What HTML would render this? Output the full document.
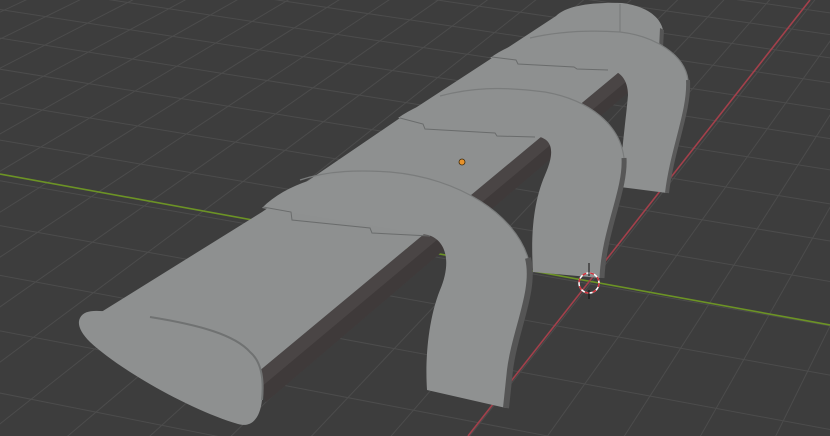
<!DOCTYPE html>
<html><head><meta charset="utf-8"><style>
html,body{margin:0;padding:0;background:#3d3d3d;width:830px;height:436px;overflow:hidden}
svg{display:block;position:absolute;left:0;top:0}
</style></head><body>
<svg id="s" width="830" height="436" viewBox="0 0 830 436" xmlns="http://www.w3.org/2000/svg">
<rect width="830" height="436" fill="#3d3d3d"/>
<g id="grid" stroke="#4c4c4c" stroke-width="1" fill="none"></g>
<line x1="0" y1="174" x2="830" y2="325" stroke="#6c9325" stroke-width="1.6"/>
<line x1="810" y1="0" x2="468" y2="436" stroke="#a3404b" stroke-width="1.6"/>
<polygon points="258,372 636,58 645,78 266,402" fill="#4a4545"/>
<polygon points="260,388 640,70 645,78 266,402" fill="#3f3a3a"/>
<path d="M98,314 L262,212 L400,118 L492,58 L556,16 C566,6 590,2 622,3 C645,6 660,16 663,30 L662,48 L636,58 L258,372 Z" fill="#8e9090"/>
<line x1="620" y1="4" x2="620" y2="32" stroke="#777" stroke-width="1"/>
<path d="M660,28 L664,30 L663,48 L659,50 Z" fill="#555"/>
<path d="M80,318 C84,310 95,310 110,312 C170,318 230,330 250,352 C262,362 264,380 262,400 C260,418 252,428 238,424 C190,410 120,370 90,342 C80,332 77,324 80,318 Z" fill="#8e9090"/>
<path d="M150,317 C200,325 235,335 250,352 C262,362 264,380 262,400" fill="none" stroke="#707272" stroke-width="2"/>
<path d="M490,58 C520,36 570,28 620,32 C655,36 685,55 688,80 C690,110 672,150 667,193 L620,187 C620,160 626,120 628,95 C628,80 620,70 608,70 Z" fill="#8e9090"/>
<path d="M688,80 C690,110 672,150 667,193" fill="none" stroke="#5a5a5a" stroke-width="4"/>
<path d="M398,118 C430,95 490,84 545,92 C590,100 620,125 624,158 C626,190 604,230 600,278 L533,272 C531,240 532,205 545,175 C556,150 552,138 535,136 Z" fill="#8e9090"/>
<path d="M624,158 C626,190 604,230 602,278" fill="none" stroke="#575757" stroke-width="5"/>
<path d="M262,208 C290,180 340,168 390,172 C460,178 515,215 528,258 C536,290 515,330 510,370 L506,408 L427,390 C425,360 428,320 440,290 C452,262 446,240 428,235 Z" fill="#8f9191"/>
<path d="M528,258 C536,290 515,330 510,370 L506,408" fill="none" stroke="#555" stroke-width="6"/>
<path d="M300,180 C330,170 360,170 390,172 C460,178 515,215 528,258" fill="none" stroke="#7a7c7c" stroke-width="1.2"/>
<path d="M440,96 C470,88 500,86 545,92 C590,100 620,125 624,158" fill="none" stroke="#7a7c7c" stroke-width="1.2"/>
<path d="M530,38 C560,31 590,30 620,32 C655,36 685,55 688,80" fill="none" stroke="#7a7c7c" stroke-width="1.2"/>
<g fill="none" stroke="#6a6c6c" stroke-width="1">
<polyline points="263,207 291,212 292,220 370,228 372,233 430,236"/>
<polyline points="400,118 423,124 425,129 495,133 497,136 535,137"/>
<polyline points="492,57 516,60 518,64 574,67 577,69 608,70"/>
</g>
<circle cx="462" cy="162" r="3" fill="#e8922a" stroke="#3a2a10" stroke-width="0.8"/>
<circle cx="589" cy="283" r="10" fill="none" stroke="#fff" stroke-width="1.5"/>
<circle cx="589" cy="283" r="10" fill="none" stroke="#d0303a" stroke-width="1.5" stroke-dasharray="4 4"/>
<line x1="589" y1="263" x2="589" y2="276" stroke="#111" stroke-width="1"/>
<line x1="589" y1="290" x2="589" y2="299" stroke="#111" stroke-width="1"/>
</svg>
<script>
(function(){
function solve(A,b){var n=b.length;for(var i=0;i<n;i++){var m=i;for(var k=i+1;k<n;k++)if(Math.abs(A[k][i])>Math.abs(A[m][i]))m=k;var t=A[i];A[i]=A[m];A[m]=t;t=b[i];b[i]=b[m];b[m]=t;for(var k=i+1;k<n;k++){var f=A[k][i]/A[i][i];for(var j=i;j<n;j++)A[k][j]-=f*A[i][j];b[k]-=f*b[i];}}var x=new Array(n);for(var i=n-1;i>=0;i--){var s=b[i];for(var j=i+1;j<n;j++)s-=A[i][j]*x[j];x[i]=s/A[i][i];}return x;}
var src=[[0,0],[-3,0],[0,4],[-3,4]],dst=[[590,284],[480,423],[830,326],[756,476]];
var A=[],b=[];
for(var i=0;i<4;i++){var u=src[i][0],v=src[i][1],X=dst[i][0],Y=dst[i][1];
A.push([u,v,1,0,0,0,-u*X,-v*X]);b.push(X);A.push([0,0,0,u,v,1,-u*Y,-v*Y]);b.push(Y);}
var h=solve(A,b);
function P(u,v){var w=h[6]*u+h[7]*v+1;return [(h[0]*u+h[1]*v+h[2])/w,(h[3]*u+h[4]*v+h[5])/w];}
var g=document.getElementById('grid'),s='';
for(var u=-14;u<=20;u++){var a=P(u,-20),c=P(u,25);s+='<line x1="'+a[0]+'" y1="'+a[1]+'" x2="'+c[0]+'" y2="'+c[1]+'"/>';}
for(var v=-20;v<=25;v++){var a=P(-14,v),c=P(20,v);s+='<line x1="'+a[0]+'" y1="'+a[1]+'" x2="'+c[0]+'" y2="'+c[1]+'"/>';}
g.innerHTML=s;
})();
</script>
</body></html>
